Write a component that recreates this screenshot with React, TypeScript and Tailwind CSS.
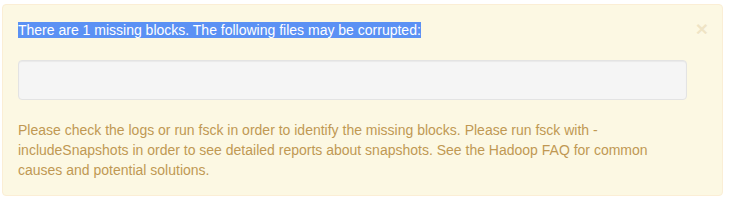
import React from "react";

export default function App() {
  return (
    <div className="w-[733px] h-[207px] bg-white pt-[4px] pl-[2px]" style={{ fontFamily: '"Liberation Sans", Arial, sans-serif' }}>
      <div className="w-[721px] rounded-[4px] border border-[#fbeed5] bg-[#fcf8e3] pt-[15px] pb-[15px] pl-[15px] pr-[35px] text-[14px] leading-[20px] text-[#c09853]">
        <button
          type="button"
          className="float-right relative -top-[2px] -right-[21px] text-[21px] font-bold leading-none text-[#c09853] opacity-20 [text-shadow:0_1px_0_#fff] cursor-pointer"
        >
          ×
        </button>
        <p className="m-0">
          <span className="bg-[#5b91f4] text-white">There are 1 missing blocks. The following files may be corrupted:</span>
        </p>
        <br />
        <div className="h-[40px] rounded-[4px] border border-[#e3e3e3] bg-[#f5f5f5] p-[19px] mb-[20px] shadow-[inset_0_1px_1px_rgba(0,0,0,0.05)]"></div>
        <p className="m-0">
          Please check the logs or run fsck in order to identify the missing blocks. Please run fsck with -includeSnapshots in order to see detailed reports about snapshots. See the Hadoop FAQ for common causes and potential solutions.
        </p>
      </div>
    </div>
  );
}
